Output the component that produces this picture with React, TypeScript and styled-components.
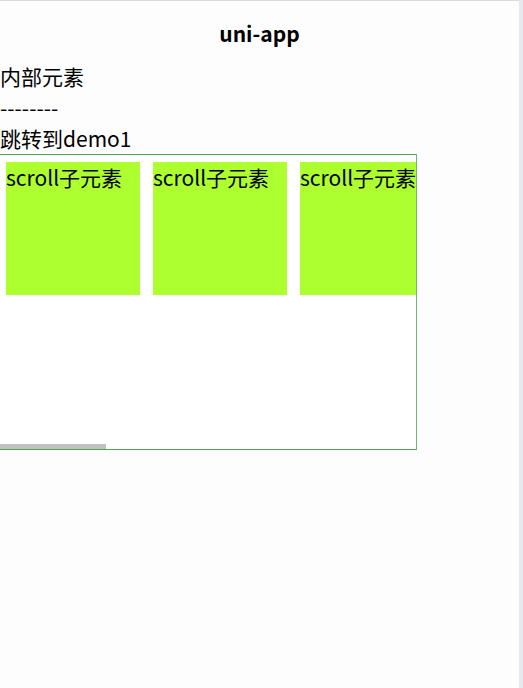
import React from 'react';
import styled, { createGlobalStyle } from 'styled-components';

const GlobalStyle = createGlobalStyle`
  html, body {
    margin: 0;
    padding: 0;
    background: #e6eaf0;
  }
  body {
    font-family: "Noto Sans CJK SC", "Noto Sans", sans-serif;
    color: #000;
    overflow: hidden;
  }
`;

const Page = styled.div`
  width: 519px;
  min-height: 688px;
  box-sizing: border-box;
  background: #fdfdfd;
  border-top: 1px solid #dcdcdc;
  overflow: hidden;
`;

const Header = styled.div`
  height: 60px;
  box-sizing: border-box;
  padding-top: 17px;
  text-align: center;
  font-size: 21px;
  line-height: 30px;
  font-weight: 700;
`;

const Line = styled.div`
  font-size: 21px;
  line-height: 31px;
  white-space: nowrap;
`;

const ScrollBox = styled.div`
  position: relative;
  margin-left: -1px;
  width: 418px;
  height: 296px;
  box-sizing: border-box;
  border: 1px solid #4ea64e;
  border-right-color: #6fb86f;
  background: #fff;
  overflow: hidden;
`;

const Track = styled.div`
  display: flex;
  gap: 13px;
  padding: 7px 0 0 6px;
`;

const Item = styled.div`
  flex: 0 0 134px;
  height: 133px;
  background: #adff2f;
  font-size: 21px;
  line-height: 31px;
  white-space: nowrap;
  overflow: hidden;
`;

const Thumb = styled.div`
  position: absolute;
  left: 0;
  bottom: 0;
  width: 106px;
  height: 5px;
  background: #c1c1c1;
`;

const items = ['scroll子元素', 'scroll子元素', 'scroll子元素'];

export default function App() {
  return (
    <>
      <GlobalStyle />
      <Page>
        <Header>uni-app</Header>
        <Line>内部元素</Line>
        <Line>--------</Line>
        <Line>跳转到demo1</Line>
        <ScrollBox>
          <Track>
            {items.map((text, i) => (
              <Item key={i}>{text}</Item>
            ))}
          </Track>
          <Thumb />
        </ScrollBox>
      </Page>
    </>
  );
}
